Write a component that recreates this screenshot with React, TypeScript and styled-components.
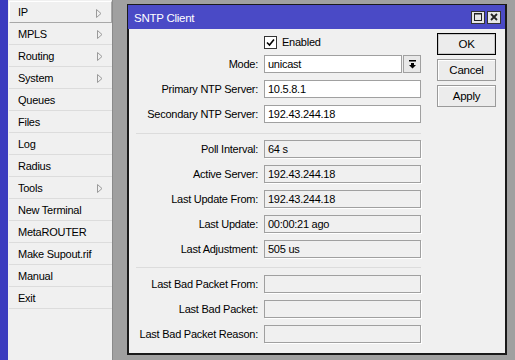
import React from "react";
import styled, { createGlobalStyle } from "styled-components";

const C = {
  strip: "#3c3cbf",
  title: "#4a4ac6",
  desk: "#a0a0a0",
  panel: "#f0f0f0",
  sep: "#dcdcdc",
  field: "#a0a0a0",
  text: "#000",
};

const Global = createGlobalStyle`
  html, body { margin: 0; padding: 0; }
  body {
    font-family: "Liberation Sans", Arial, sans-serif;
    font-size: 11px;
    letter-spacing: -0.25px;
    color: ${C.text};
    background: ${C.desk};
  }
`;

const Screen = styled.div`
  display: flex;
  width: 515px;
  height: 360px;
  overflow: hidden;
`;

const Strip = styled.div`
  width: 8px;
  background: ${C.strip};
`;

const Menu = styled.div`
  width: 103px;
  padding: 1px 0 0 1px;
  background: ${C.panel};
  border-right: 1px solid #8a8a8a;
  box-sizing: border-box;
  width: 105px;
`;

const Item = styled.div<{ $active?: boolean }>`
  position: relative;
  height: 22px;
  display: flex;
  align-items: center;
  padding-left: 9px;
  box-sizing: border-box;
  border-bottom: 1px solid ${C.sep};
  ${(p) =>
    p.$active &&
    `border: 1px solid #fff; border-right-color: #a8a8a8; border-bottom-color: #a8a8a8; padding-left: 8px;`}
`;

const Arrow = styled.svg`
  position: absolute;
  right: 9px;
  top: 7px;
`;

const Desk = styled.div`
  flex: 1;
  padding: 4px 0 0 14px;
`;

const Win = styled.div`
  width: 380px;
  height: 351px;
  box-sizing: border-box;
  border: 1px solid #1a1a1a;
  border-right-width: 2px;
  border-bottom-width: 2px;
  background: ${C.panel};
  display: flex;
  flex-direction: column;
`;

const TitleBar = styled.div`
  height: 24px;
  background: ${C.title};
  color: #fff;
  display: flex;
  align-items: center;
  padding: 0 4px 0 6px;
  font-size: 11.5px;
`;

const TitleText = styled.div`
  flex: 1;
  padding-top: 1px;
`;

const TBtn = styled.div`
  width: 14px;
  height: 13px;
  box-sizing: border-box;
  margin-left: 2px;
  background: #e6e6e6;
  border: 1px solid #333;
  display: flex;
  align-items: center;
  justify-content: center;
`;

const Body = styled.div`
  flex: 1;
  display: flex;
  border-left: 1px solid #1a1a1a;
`;

const Form = styled.div`
  width: 285px;
  padding: 6px 0 0 7px;
  display: flex;
  flex-direction: column;
`;

const Row = styled.div`
  display: grid;
  grid-template-columns: 122px 157px;
  column-gap: 6px;
  align-items: center;
  height: 18px;
  margin-top: 7px;
`;

const CheckRow = styled(Row)`
  height: 14px;
  margin-top: 0;
  margin-bottom: -1px;
`;

const Label = styled.div`
  text-align: right;
  white-space: nowrap;
`;

const Field = styled.div<{ $ro?: boolean }>`
  height: 18px;
  box-sizing: border-box;
  border: 1px solid ${C.field};
  background: ${(p) => (p.$ro ? C.panel : "#fff")};
  box-shadow: ${(p) => (p.$ro ? "1px 1px 0 #fff" : "none")};
  padding-left: 3px;
  display: flex;
  align-items: center;
  white-space: nowrap;
`;

const Combo = styled.div`
  display: flex;
  gap: 1px;
  & > ${Field} { flex: 1; }
`;

const DropBtn = styled.div`
  width: 18px;
  height: 18px;
  box-sizing: border-box;
  border: 1px solid ${C.field};
  background: #e8e8e8;
  display: flex;
  align-items: center;
  justify-content: center;
`;

const Check = styled.label`
  display: flex;
  align-items: center;
  gap: 5px;
`;

const Box = styled.div`
  width: 13px;
  height: 13px;
  box-sizing: border-box;
  border: 1px solid #333;
  background: #fff;
  display: flex;
  align-items: center;
  justify-content: center;
`;

const Sep = styled.div<{ $top: number; $bottom: number }>`
  height: 1px;
  background: ${C.sep};
  margin: ${(p) => `${p.$top}px 0 ${p.$bottom - 7}px`};
`;

const Buttons = styled.div`
  display: flex;
  flex-direction: column;
  gap: 4px;
  padding: 4px 0 0 16px;
`;

const Btn = styled.div<{ $def?: boolean }>`
  width: 59px;
  height: 22px;
  box-sizing: border-box;
  display: flex;
  align-items: center;
  justify-content: center;
  background: #ececec;
  border: 1px solid ${(p) => (p.$def ? "#000" : "#9a9a9a")};
  box-shadow: ${(p) => (p.$def ? "inset 0 0 0 1px #c8c8c8" : "inset 1px 1px 0 #fff")};
  font-size: 11.5px;
`;

const menu: [string, boolean][] = [
  ["IP", true], ["MPLS", true], ["Routing", true], ["System", true],
  ["Queues", false], ["Files", false], ["Log", false], ["Radius", false],
  ["Tools", true], ["New Terminal", false], ["MetaROUTER", false],
  ["Make Supout.rif", false], ["Manual", false], ["Exit", false],
];

const status = [
  ["Poll Interval:", "64 s"],
  ["Active Server:", "192.43.244.18"],
  ["Last Update From:", "192.43.244.18"],
  ["Last Update:", "00:00:21 ago"],
  ["Last Adjustment:", "505 us"],
];

const bad = ["Last Bad Packet From:", "Last Bad Packet:", "Last Bad Packet Reason:"];

export default function App() {
  return (
    <>
      <Global />
      <Screen>
        <Strip />
        <Menu>
          {menu.map(([name, sub], i) => (
            <Item key={name} $active={i === 0}>
              {name}
              {sub && (
                <Arrow width="6" height="9" viewBox="0 0 6 9">
                  <path d="M0.5 0.5V8.5M0.5 0.5L5 4.5L0.5 8.5" fill="none" stroke="#9a9a9a" strokeWidth="1" />
                </Arrow>
              )}
            </Item>
          ))}
        </Menu>
        <Desk>
          <Win>
            <TitleBar>
              <TitleText>SNTP Client</TitleText>
              <TBtn>
                <svg width="8" height="8" viewBox="0 0 8 8">
                  <rect x="0.5" y="0.5" width="7" height="7" fill="none" stroke="#222" />
                  <line x1="0" y1="1" x2="8" y2="1" stroke="#222" />
                </svg>
              </TBtn>
              <TBtn>
                <svg width="8" height="8" viewBox="0 0 8 8">
                  <path d="M1 1L7 7M7 1L1 7" stroke="#222" strokeWidth="1.8" />
                </svg>
              </TBtn>
            </TitleBar>
            <Body>
              <Form>
                <CheckRow>
                  <span />
                  <Check>
                    <Box>
                      <svg width="9" height="9" viewBox="0 0 9 9">
                        <path d="M1 4.5L3.5 7L8 1.5" fill="none" stroke="#000" strokeWidth="1.6" />
                      </svg>
                    </Box>
                    Enabled
                  </Check>
                </CheckRow>
                <Row>
                  <Label>Mode:</Label>
                  <Combo>
                    <Field>unicast</Field>
                    <DropBtn>
                      <svg width="9" height="9" viewBox="0 0 9 9">
                        <rect x="1" y="0" width="7" height="1.5" fill="#000" />
                        <path d="M3 3H6V5H8L4.5 8.5L1 5H3Z" fill="#000" />
                      </svg>
                    </DropBtn>
                  </Combo>
                </Row>
                <Row>
                  <Label>Primary NTP Server:</Label>
                  <Field>10.5.8.1</Field>
                </Row>
                <Row>
                  <Label>Secondary NTP Server:</Label>
                  <Field>192.43.244.18</Field>
                </Row>
                <Sep $top={10} $bottom={6} />
                {status.map(([l, v]) => (
                  <Row key={l}>
                    <Label>{l}</Label>
                    <Field $ro>{v}</Field>
                  </Row>
                ))}
                <Sep $top={9} $bottom={7} />
                {bad.map((l) => (
                  <Row key={l}>
                    <Label>{l}</Label>
                    <Field $ro />
                  </Row>
                ))}
              </Form>
              <Buttons>
                <Btn $def>OK</Btn>
                <Btn>Cancel</Btn>
                <Btn>Apply</Btn>
              </Buttons>
            </Body>
          </Win>
        </Desk>
      </Screen>
    </>
  );
}
